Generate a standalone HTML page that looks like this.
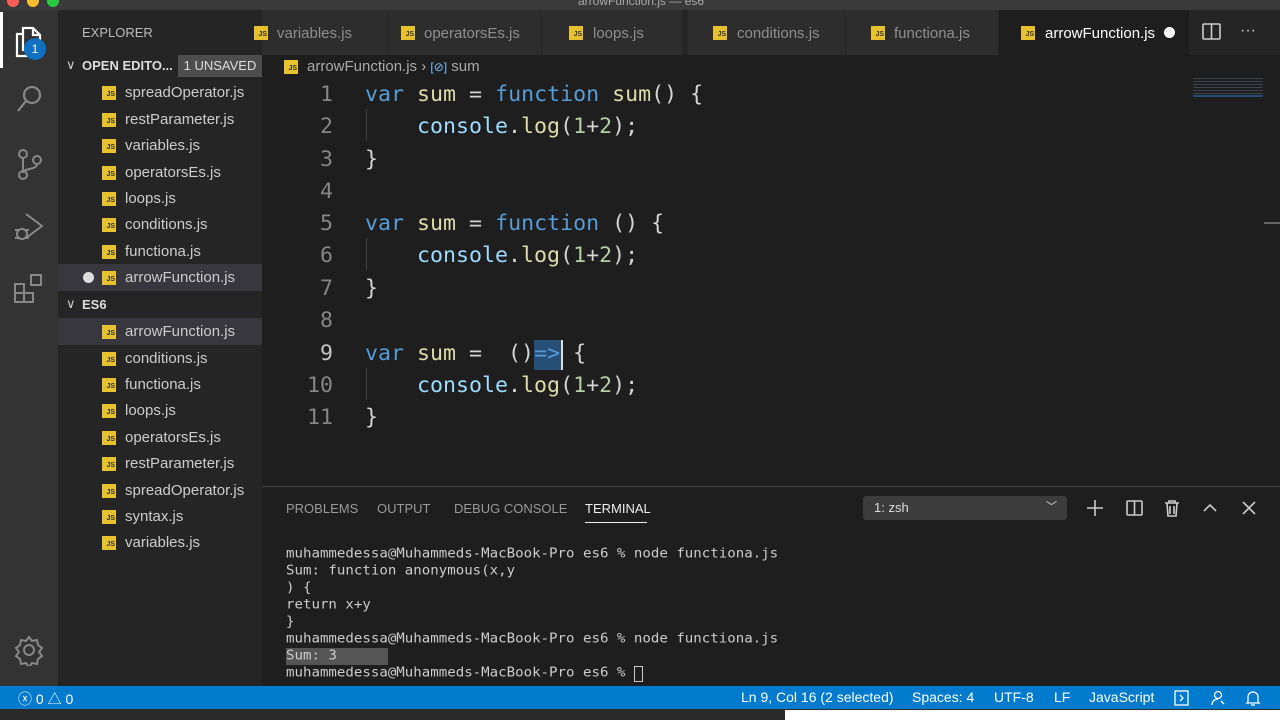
<!DOCTYPE html>
<html><head><meta charset="utf-8"><style>
*{margin:0;padding:0;box-sizing:border-box}
body{width:1280px;height:720px;overflow:hidden;background:#1e1e1e;font-family:"Liberation Sans",sans-serif;position:relative}
.a{position:absolute}
.js{position:absolute;width:14px;height:14px;background:#e8c12e;font:bold 7px "Liberation Sans",sans-serif;color:#333;text-align:right;padding:5px 1px 0 0;line-height:8px}
.si{position:absolute;left:125px;font-size:15px;color:#ccc;white-space:nowrap}
.tab{position:absolute;top:10px;height:45px;background:#2d2d2d;color:#8e8e8e;font-size:15px;line-height:45px;white-space:nowrap}
.code{position:absolute;left:365px;font:21.6px "DejaVu Sans Mono",monospace;color:#d4d4d4;white-space:pre}
.ln{position:absolute;width:70px;left:263px;text-align:right;font:21.6px "DejaVu Sans Mono",monospace;color:#858585}
.k{color:#569cd6}.v{color:#9cdcfe}.f{color:#dcdcaa}.n{color:#b5cea8}
.t{position:absolute;left:286px;font:14.1px "DejaVu Sans Mono",monospace;color:#ccc;white-space:pre;transform:scaleY(.95);transform-origin:left top}
.st{position:absolute;top:689px;font-size:14px;color:#fff;white-space:nowrap}
</style></head><body>
<div class="a" style="left:0;top:0;width:1280px;height:10px;background:#3a3a3a"></div>
<div class="a" style="left:7px;top:-5px;width:12px;height:12px;border-radius:50%;background:#fd5f57"></div>
<div class="a" style="left:27px;top:-5px;width:12px;height:12px;border-radius:50%;background:#febc2e"></div>
<div class="a" style="left:47px;top:-5px;width:12px;height:12px;border-radius:50%;background:#28c840"></div>
<div class="a" style="left:578px;top:-6px;font-size:12px;color:#aaa">arrowFunction.js — es6</div>
<div class="a" style="left:0;top:10px;width:58px;height:676px;background:#333"></div>
<div class="a" style="left:0;top:12px;width:3px;height:56px;background:#fff"></div>
<svg class="a" style="left:13px;top:24px" width="34" height="36" viewBox="0 0 34 36" fill="none" stroke="#fff" stroke-width="2.2"><path d="M10 4h10l7 7v15H10z"/><path d="M20 4v7h7"/><path d="M10 10H4v22h16v-6"/></svg>
<div class="a" style="left:24px;top:38px;width:22px;height:22px;border-radius:50%;background:#0e70c0;color:#fff;font-size:12px;text-align:center;line-height:22px">1</div>
<svg class="a" style="left:15px;top:84px" width="30" height="32" fill="none" stroke="#888" stroke-width="2.2"><circle cx="17" cy="11" r="8"/><path d="M11 17L3 27"/></svg>
<svg class="a" style="left:16px;top:148px" width="28" height="34" fill="none" stroke="#888" stroke-width="2"><circle cx="7" cy="6" r="4"/><circle cx="7" cy="27" r="4"/><circle cx="21" cy="12" r="4"/><path d="M7 10v13M21 16c0 6-14 4-14 9"/></svg>
<svg class="a" style="left:13px;top:210px" width="34" height="34" fill="none" stroke="#888" stroke-width="2"><path d="M13 4l16 12-16 12"/><circle cx="9" cy="24" r="5"/><path d="M2 20h4M2 28h4M12 20h4M12 28h4"/></svg>
<svg class="a" style="left:13px;top:272px" width="34" height="34" fill="none" stroke="#888" stroke-width="2"><rect x="2" y="12" width="9" height="9"/><rect x="2" y="21" width="9" height="9"/><rect x="11" y="21" width="9" height="9"/><rect x="18" y="3" width="10" height="10"/></svg>
<svg class="a" style="left:13px;top:634px" width="32" height="32" fill="none" stroke="#888" stroke-width="2"><circle cx="16" cy="16" r="5"/><path d="M16 3l3 4 5-1 1 5 4 3-3 4 3 4-4 3-1 5-5-1-3 4-3-4-5 1-1-5-4-3 3-4-3-4 4-3 1-5 5 1z"/></svg>
<div class="a" style="left:58px;top:10px;width:204px;height:676px;background:#252526"></div>
<div class="a" style="left:82px;top:25px;font-size:13px;color:#bbb">EXPLORER</div>
<div class="a" style="left:66px;top:57px;font-size:13px;color:#ccc">∨</div>
<div class="a" style="left:82px;top:58px;font-size:13px;color:#ddd;font-weight:bold">OPEN EDITO...</div>
<div class="a" style="left:178px;top:55px;width:84px;height:22px;background:#4d4d4d;color:#ddd;font-size:13px;text-align:center;line-height:22px">1 UNSAVED</div>
<div class="a" style="left:58px;top:264px;width:204px;height:27px;background:#37373d"></div>
<div class="a" style="left:83px;top:272px;width:11px;height:11px;border-radius:50%;background:#ddd"></div>
<div class="a" style="left:66px;top:296px;font-size:13px;color:#ccc">∨</div>
<div class="a" style="left:82px;top:297px;font-size:13px;color:#ddd;font-weight:bold">ES6</div>
<div class="a" style="left:58px;top:318px;width:204px;height:27px;background:#37373d"></div>
<div class="js" style="left:102px;top:86px">JS</div><div class="si" style="top:84px">spreadOperator.js</div>
<div class="js" style="left:102px;top:113px">JS</div><div class="si" style="top:111px">restParameter.js</div>
<div class="js" style="left:102px;top:139px">JS</div><div class="si" style="top:137px">variables.js</div>
<div class="js" style="left:102px;top:166px">JS</div><div class="si" style="top:164px">operatorsEs.js</div>
<div class="js" style="left:102px;top:192px">JS</div><div class="si" style="top:190px">loops.js</div>
<div class="js" style="left:102px;top:218px">JS</div><div class="si" style="top:216px">conditions.js</div>
<div class="js" style="left:102px;top:245px">JS</div><div class="si" style="top:243px">functiona.js</div>
<div class="js" style="left:102px;top:271px">JS</div><div class="si" style="top:269px">arrowFunction.js</div>
<div class="js" style="left:102px;top:325px">JS</div><div class="si" style="top:323px">arrowFunction.js</div>
<div class="js" style="left:102px;top:352px">JS</div><div class="si" style="top:350px">conditions.js</div>
<div class="js" style="left:102px;top:378px">JS</div><div class="si" style="top:376px">functiona.js</div>
<div class="js" style="left:102px;top:404px">JS</div><div class="si" style="top:402px">loops.js</div>
<div class="js" style="left:102px;top:431px">JS</div><div class="si" style="top:429px">operatorsEs.js</div>
<div class="js" style="left:102px;top:457px">JS</div><div class="si" style="top:455px">restParameter.js</div>
<div class="js" style="left:102px;top:484px">JS</div><div class="si" style="top:482px">spreadOperator.js</div>
<div class="js" style="left:102px;top:510px">JS</div><div class="si" style="top:508px">syntax.js</div>
<div class="js" style="left:102px;top:536px">JS</div><div class="si" style="top:534px">variables.js</div>
<div class="a" style="left:262px;top:10px;width:1018px;height:45px;background:#252526"></div>
<div class="tab" style="left:262px;width:126px"><span class="js" style="left:-8px;top:16px">JS</span><span style="position:absolute;left:15px;top:1px">variables.js</span></div>
<div class="tab" style="left:389px;width:152px"><span class="js" style="left:12px;top:16px">JS</span><span style="position:absolute;left:35px;top:1px">operatorsEs.js</span></div>
<div class="tab" style="left:542px;width:140px"><span class="js" style="left:27px;top:16px">JS</span><span style="position:absolute;left:51px;top:1px">loops.js</span></div>
<div class="tab" style="left:688px;width:157px"><span class="js" style="left:25px;top:16px">JS</span><span style="position:absolute;left:49px;top:1px">conditions.js</span></div>
<div class="tab" style="left:846px;width:152px"><span class="js" style="left:25px;top:16px">JS</span><span style="position:absolute;left:48px;top:1px">functiona.js</span></div>
<div class="tab" style="left:999px;width:190px;background:#1e1e1e;color:#fff"><span class="js" style="left:22px;top:16px">JS</span><span style="position:absolute;left:46px;top:1px">arrowFunction.js</span><span style="position:absolute;left:165px;top:17px;width:11px;height:11px;border-radius:50%;background:#fff"></span></div>
<svg class="a" style="left:1202px;top:23px" width="20" height="18" fill="none" stroke="#ccc" stroke-width="1.6"><rect x="1" y="1" width="17" height="15" rx="1"/><path d="M9.5 1v15"/></svg>
<div class="a" style="left:1240px;top:22px;color:#ccc;font-size:16px">···</div>
<div class="js" style="left:284px;top:60px">JS</div>
<div class="a" style="left:307px;top:58px;font-size:15px;color:#aaa">arrowFunction.js › <span style="color:#75beff;font-size:12px">[⊘]</span> sum</div>
<div class="a" style="left:1193px;top:78px;width:70px;height:20px;opacity:.5;background:repeating-linear-gradient(#5a6a80 0 1px,transparent 1px 3px)"></div>
<div class="a" style="left:1193px;top:95px;width:70px;height:2px;background:#264f78"></div>
<div class="a" style="left:1264px;top:222px;width:16px;height:2px;background:#666"></div>
<div class="ln" style="top:82px">1</div><div class="code" style="top:82px"><span class="k">var</span> <span class="f">sum</span> = <span class="k">function</span> <span class="f">sum</span>() {</div>
<div class="ln" style="top:114px">2</div><div class="code" style="top:114px">    <span class="v">console</span>.<span class="f">log</span>(<span class="n">1</span>+<span class="n">2</span>);</div>
<div class="ln" style="top:147px">3</div><div class="code" style="top:147px">}</div>
<div class="ln" style="top:179px">4</div>
<div class="ln" style="top:211px">5</div><div class="code" style="top:211px"><span class="k">var</span> <span class="f">sum</span> = <span class="k">function</span> () {</div>
<div class="ln" style="top:243px">6</div><div class="code" style="top:243px">    <span class="v">console</span>.<span class="f">log</span>(<span class="n">1</span>+<span class="n">2</span>);</div>
<div class="ln" style="top:276px">7</div><div class="code" style="top:276px">}</div>
<div class="ln" style="top:308px">8</div>
<div class="a" style="left:534px;top:340px;width:27px;height:30px;background:#264f78"></div>
<div class="a" style="left:561px;top:340px;width:2px;height:30px;background:#ddd"></div>
<div class="ln" style="top:341px;color:#c6c6c6">9</div><div class="code" style="top:341px"><span class="k">var</span> <span class="f">sum</span> =  ()<span class="k">=&gt;</span> {</div>
<div class="ln" style="top:373px">10</div><div class="code" style="top:373px">    <span class="v">console</span>.<span class="f">log</span>(<span class="n">1</span>+<span class="n">2</span>);</div>
<div class="ln" style="top:405px">11</div><div class="code" style="top:405px">}</div>
<div class="a" style="left:366px;top:109px;width:1px;height:32px;background:#404040"></div>
<div class="a" style="left:366px;top:238px;width:1px;height:32px;background:#404040"></div>
<div class="a" style="left:366px;top:368px;width:1px;height:32px;background:#404040"></div>
<div class="a" style="left:262px;top:486px;width:1018px;height:200px;background:#1e1e1e;border-top:1px solid #444"></div>
<div class="a" style="left:286px;top:501px;font-size:13px;color:#999">PROBLEMS</div>
<div class="a" style="left:377px;top:501px;font-size:13px;color:#999">OUTPUT</div>
<div class="a" style="left:454px;top:501px;font-size:13px;color:#999">DEBUG CONSOLE</div>
<div class="a" style="left:585px;top:501px;font-size:13px;color:#eee">TERMINAL</div>
<div class="a" style="left:585px;top:522px;width:62px;height:1px;background:#eee"></div>
<div class="a" style="left:863px;top:496px;width:204px;height:24px;background:#3c3c3c;border-radius:3px;color:#ddd;font-size:13px;line-height:24px;padding-left:11px">1: zsh<span style="position:absolute;right:10px;top:-1px;font-size:11px">﹀</span></div>
<svg class="a" style="left:1085px;top:498px" width="180" height="20" fill="none" stroke="#ccc" stroke-width="1.6"><path d="M10 2v16M2 10h16"/><rect x="42" y="3" width="15" height="14" rx="1"/><path d="M49.5 3v14"/><path d="M80 5h14M84 5V3h6v2M82 5l1 13h8l1-13M85 8v8M89 8v8"/><path d="M119 13l6-6 6 6"/><path d="M158 4l12 12M170 4l-12 12"/></svg>
<div class="t" style="top:546px">muhammedessa@Muhammeds-MacBook-Pro es6 % node functiona.js</div>
<div class="t" style="top:563px">Sum: function anonymous(x,y</div>
<div class="t" style="top:580px">) {</div>
<div class="t" style="top:597px">return x+y</div>
<div class="t" style="top:614px">}</div>
<div class="t" style="top:631px">muhammedessa@Muhammeds-MacBook-Pro es6 % node functiona.js</div>
<div class="a" style="left:286px;top:648px;width:102px;height:17px;background:#555"></div>
<div class="t" style="top:648px">Sum: 3</div>
<div class="t" style="top:665px">muhammedessa@Muhammeds-MacBook-Pro es6 % </div>
<div class="a" style="left:634px;top:666px;width:9px;height:16px;border:1px solid #ccc"></div>
<div class="a" style="left:0;top:686px;width:1280px;height:23px;background:#007acc"></div>
<div class="st" style="left:18px">ⓧ 0 △ 0</div>
<div class="st" style="left:741px">Ln 9, Col 16 (2 selected)</div>
<div class="st" style="left:912px">Spaces: 4</div>
<div class="st" style="left:994px">UTF-8</div>
<div class="st" style="left:1054px">LF</div>
<div class="st" style="left:1089px">JavaScript</div>
<svg class="a" style="left:1174px;top:690px" width="90" height="16" fill="none" stroke="#fff" stroke-width="1.3"><rect x="1" y="1" width="13" height="14"/><path d="M6 5l3 3-3 3"/><circle cx="44" cy="5" r="3.5"/><path d="M38 15c0-4 3-6 6-6M47 11l3 3"/><path d="M74 12V7a5 5 0 0 1 10 0v5l1 1H73zM77 15h4"/></svg>
<div class="a" style="left:0;top:709px;width:1280px;height:11px;background:#2a2a2a"></div>
<div class="a" style="left:785px;top:710px;width:495px;height:10px;background:#fff"></div>
</body></html>
